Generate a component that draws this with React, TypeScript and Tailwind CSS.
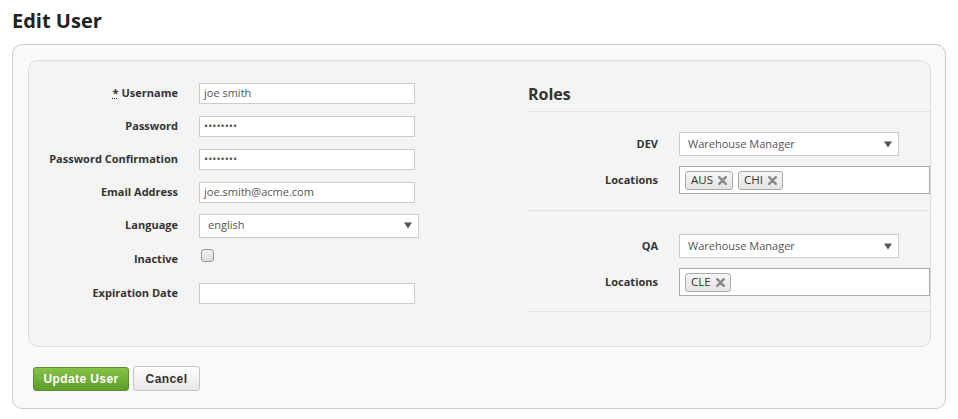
import React from 'react';

const font = { fontFamily: '"Open Sans", "Liberation Sans", sans-serif' };

function Arrow() {
  return (
    <svg width="8" height="7" viewBox="0 0 8 7" className="shrink-0">
      <path d="M0 0.5 H8 L4 6.5 Z" fill="#555" />
    </svg>
  );
}

function Cross() {
  return (
    <svg width="9" height="9" viewBox="0 0 9 9" className="shrink-0">
      <path d="M1.2 1.2 L7.8 7.8 M7.8 1.2 L1.2 7.8" stroke="#8a8a8a" strokeWidth="2.4" strokeLinecap="round" />
    </svg>
  );
}

function Tag({ label }: { label: string }) {
  return (
    <span className="flex h-[19px] items-center gap-[5px] rounded-[3px] border border-[#aaa] bg-gradient-to-b from-[#f6f6f6] to-[#e4e4e4] pl-[5px] pr-[5px] text-[11.5px] leading-none text-[#333]">
      {label}
      <Cross />
    </span>
  );
}

function Row({ label, children, required, h = 'h-[33px]' }: { label: string; children: React.ReactNode; required?: boolean; h?: string }) {
  return (
    <div className={`flex items-center ${h}`}>
      <label className="w-[149px] text-right text-[11px] font-bold text-[#333]">
        {required && <abbr className="mr-[3px] underline decoration-dotted">*</abbr>}
        {label}
      </label>
      <div className="ml-[21px] flex items-center">{children}</div>
    </div>
  );
}

function TextInput({ value }: { value: string }) {
  return (
    <div className="flex h-[21px] w-[216px] items-center border border-[#ccc] bg-white px-[4px] text-[11px] text-[#555]">
      {value}
    </div>
  );
}

function Select({ value, width }: { value: string; width: string }) {
  return (
    <div className={`flex h-[24px] items-center justify-between border border-[#ccc] bg-white pl-[8px] pr-[6px] text-[11px] text-[#555] ${width}`}>
      <span>{value}</span>
      <Arrow />
    </div>
  );
}

function RoleSection({ name, tags, pt, pb }: { name: string; tags: string[]; pt: string; pb: string }) {
  return (
    <div className={`border-b border-[#e2e2e2] ${pt} ${pb}`}>
      <div className="flex items-center">
        <span className="w-[130px] text-right text-[11px] font-bold text-[#333]">{name}</span>
        <div className="ml-[21px]">
          <Select value="Warehouse Manager" width="w-[220px]" />
        </div>
      </div>
      <div className="mt-[10px] flex items-center">
        <span className="w-[130px] text-right text-[11px] font-bold text-[#333]">Locations</span>
        <div className="ml-[21px] flex h-[28px] flex-1 items-center gap-[5px] border border-[#aaa] bg-white px-[5px]">
          {tags.map((t) => (
            <Tag key={t} label={t} />
          ))}
        </div>
      </div>
    </div>
  );
}

export default function App() {
  return (
    <div className="min-h-screen bg-white" style={font}>
      <h1 className="ml-[12px] pt-[7px] text-[20px] font-bold leading-[28px] text-[#222]">Edit User</h1>

      <div className="ml-[12px] mt-[9px] h-[365px] w-[934px] rounded-[10px] border border-[#ccc] bg-[#f9f9f9] px-[15px] pt-[15px]">
        <div className="flex h-[287px] w-[903px] rounded-[10px] border border-[#ddd] bg-[#f4f4f4]">
          {/* left: account fields */}
          <div className="w-[499px] pt-[16px]">
            <Row label="Username" required>
              <TextInput value="joe smith" />
            </Row>
            <Row label="Password">
              <TextInput value="••••••••" />
            </Row>
            <Row label="Password Confirmation">
              <TextInput value="••••••••" />
            </Row>
            <Row label="Email Address">
              <TextInput value="joe.smith@acme.com" />
            </Row>
            <Row label="Language">
              <Select value="english" width="w-[220px]" />
            </Row>
            <Row label="Inactive" h="h-[35px]">
              <span className="ml-[2px] mb-[8px] h-[13px] w-[13px] rounded-[3px] border border-[#999] bg-gradient-to-b from-[#f0f0f0] to-[#dcdcdc]" />
            </Row>
            <Row label="Expiration Date">
              <TextInput value="" />
            </Row>
          </div>

          {/* right: roles */}
          <div className="flex-1">
            <h2 className="border-b border-[#e2e2e2] pb-[6px] pt-[22px] text-[16px] font-bold leading-[22px] text-[#333]">
              Roles
            </h2>
            <RoleSection name="DEV" tags={['AUS', 'CHI']} pt="pt-[20px]" pb="pb-[16px]" />
            <RoleSection name="QA" tags={['CLE']} pt="pt-[23px]" pb="pb-[15px]" />
          </div>
        </div>

        <div className="mt-[19px] flex items-center gap-[4px] pl-[5px]" style={{ fontFamily: '"Liberation Sans", Arial, sans-serif' }}>
          <button className="h-[24px] w-[96px] rounded-[3px] border border-[#5b9128] bg-gradient-to-b from-[#86c246] to-[#5e9d2b] text-[12px] font-bold tracking-[0.4px] text-white">
            Update User
          </button>
          <button className="h-[25px] w-[67px] rounded-[3px] border border-[#c4c4c4] bg-gradient-to-b from-[#ffffff] to-[#e6e6e6] text-[12px] font-bold tracking-[0.4px] text-[#333]">
            Cancel
          </button>
        </div>
      </div>
    </div>
  );
}
